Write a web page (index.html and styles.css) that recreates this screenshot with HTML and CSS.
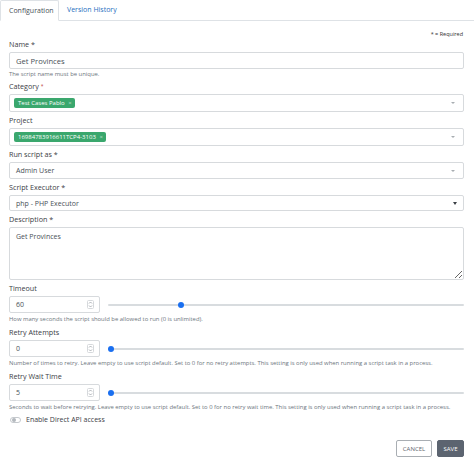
FILE: index.html
```html
<!DOCTYPE html>
<html lang="en">
<head>
  <meta charset="UTF-8">
  <title>Script Configuration</title>
  <link rel="stylesheet" href="styles.css">
</head>
<body>
  <div class="tabs">
    <div class="tab active">Configuration</div>
    <div class="tab link">Version History</div>
  </div>

  <form class="form">
    <div class="required-note">* = Required</div>

    <div class="group">
      <label>Name *</label>
      <input class="control name" type="text" value="Get Provinces">
      <div class="help">The script name must be unique.</div>
    </div>

    <div class="group">
      <label>Category <span class="sup">*</span></label>
      <div class="control multi">
        <span class="tag">Test Cases Pablo <span class="x">&times;</span></span>
        <span class="caret light"></span>
      </div>
    </div>

    <div class="group">
      <label>Project</label>
      <div class="control multi">
        <span class="tag">16984783916611TCP4-3103 <span class="x">&times;</span></span>
        <span class="caret light"></span>
      </div>
    </div>

    <div class="group">
      <label>Run script as *</label>
      <div class="control single">
        <span>Admin User</span>
        <span class="caret light"></span>
      </div>
    </div>

    <div class="group">
      <label>Script Executor *</label>
      <div class="control single short">
        <span>php - PHP Executor</span>
        <span class="caret dark"></span>
      </div>
    </div>

    <div class="group">
      <label>Description *</label>
      <textarea class="control area">Get Provinces</textarea>
    </div>

    <div class="group wide">
      <label>Timeout</label>
      <div class="slider-row">
        <div class="control number">
          <span>60</span>
          <svg class="spin" width="7" height="9" viewBox="0 0 7 9"><rect x="0.5" y="0.5" width="6" height="8" rx="1" fill="#fff" stroke="#d6d9dc"/><path d="M2 3.5 L3.5 2 L5 3.5" fill="none" stroke="#9aa0a6" stroke-width="0.8"/><path d="M2 5.5 L3.5 7 L5 5.5" fill="none" stroke="#9aa0a6" stroke-width="0.8"/></svg>
        </div>
        <input class="range" type="range" min="0" max="300" value="60">
      </div>
      <div class="help">How many seconds the script should be allowed to run (0 is unlimited).</div>
    </div>

    <div class="group wide">
      <label>Retry Attempts</label>
      <div class="slider-row">
        <div class="control number">
          <span>0</span>
          <svg class="spin" width="7" height="9" viewBox="0 0 7 9"><rect x="0.5" y="0.5" width="6" height="8" rx="1" fill="#fff" stroke="#d6d9dc"/><path d="M2 3.5 L3.5 2 L5 3.5" fill="none" stroke="#9aa0a6" stroke-width="0.8"/><path d="M2 5.5 L3.5 7 L5 5.5" fill="none" stroke="#9aa0a6" stroke-width="0.8"/></svg>
        </div>
        <input class="range" type="range" min="0" max="10" value="0">
      </div>
      <div class="help">Number of times to retry. Leave empty to use script default. Set to 0 for no retry attempts. This setting is only used when running a script task in a process.</div>
    </div>

    <div class="group wide">
      <label>Retry Wait Time</label>
      <div class="slider-row">
        <div class="control number">
          <span>5</span>
          <svg class="spin" width="7" height="9" viewBox="0 0 7 9"><rect x="0.5" y="0.5" width="6" height="8" rx="1" fill="#fff" stroke="#d6d9dc"/><path d="M2 3.5 L3.5 2 L5 3.5" fill="none" stroke="#9aa0a6" stroke-width="0.8"/><path d="M2 5.5 L3.5 7 L5 5.5" fill="none" stroke="#9aa0a6" stroke-width="0.8"/></svg>
        </div>
        <input class="range" type="range" min="0" max="3600" value="5">
      </div>
      <div class="help">Seconds to wait before retrying. Leave empty to use script default. Set to 0 for no retry wait time. This setting is only used when running a script task in a process.</div>
    </div>

    <div class="switch-row">
      <span class="switch"><span class="knob"></span></span>
      <span>Enable Direct API access</span>
    </div>

    <div class="actions">
      <button type="button" class="btn cancel">CANCEL</button>
      <button type="button" class="btn save">SAVE</button>
    </div>
  </form>
</body>
</html>
```

FILE: styles.css
```css
body {
  font-family: 'Open Sans', sans-serif;
  background-color: #ffffff;
  color: #444a50;
  margin: 0;
  padding: 0;
}
.tabs {
  display: flex;
  height: 21px;
  border-bottom: 1px solid #dee2e6;
  box-sizing: border-box;
}
.tab {
  font-size: 7px;
  line-height: 20px;
  padding: 0 7px 0 8px;
  height: 21px;
  box-sizing: border-box;
}
.tab.active {
  border: 1px solid #dee2e6;
  border-bottom-color: #ffffff;
  border-top-left-radius: 2px;
  border-top-right-radius: 2px;
  background: #ffffff;
  color: #495057;
  padding-left: 8px;
  width: 59px;
}
.tab.link {
  color: #1f6fc0;
}
.form {
  padding: 8px 10px 0 9px;
}
.required-note {
  text-align: right;
  font-size: 5.5px;
  line-height: 8px;
  color: #333;
  padding-right: 1px;
  margin-top: 1px;
  margin-bottom: 1px;
}
.group {
  margin-bottom: 3px;
}
.group.wide {
  margin-bottom: 4px;
}
label {
  display: block;
  font-size: 7.2px;
  line-height: 10px;
  margin-bottom: 3px;
  color: #3b4046;
}
.sup {
  font-size: 5px;
  vertical-align: top;
  color: #c04040;
}
.control {
  display: flex;
  align-items: center;
  width: 100%;
  height: 17px;
  box-sizing: border-box;
  border: 1px solid #d7dadd;
  border-radius: 2px;
  padding: 0 6px;
  font-family: 'Open Sans', sans-serif;
  font-size: 7px;
  color: #495057;
  background: #ffffff;
  outline: none;
}
.control.name {
  font-size: 7.6px;
}
.multi {
  height: 18px;
  padding-left: 4px;
}
.single {
  justify-content: space-between;
}
.short {
  height: 16px;
}
.multi .caret {
  margin-left: auto;
}
.tag {
  background-color: #3aa76d;
  color: #ffffff;
  font-size: 6px;
  line-height: 10px;
  padding: 0 3px 0 4px;
  border-radius: 2px;
}
.tag .x {
  opacity: 0.6;
  margin-left: 2px;
}
.caret {
  width: 0;
  height: 0;
  border-left: 2px solid transparent;
  border-right: 2px solid transparent;
  margin-right: 2px;
}
.caret.light {
  border-top: 2px solid #a8adb2;
}
.caret.dark {
  border-top: 3px solid #3a3f44;
  border-left-width: 2.5px;
  border-right-width: 2.5px;
  margin-right: 0;
}
.area {
  display: block;
  height: 53px;
  padding: 4px 6px;
  resize: vertical;
  line-height: 10px;
}
.slider-row {
  display: flex;
  align-items: center;
  gap: 8px;
}
.number {
  width: 91px;
  flex: none;
  justify-content: space-between;
  padding-right: 5px;
}
.spin {
  display: block;
}
.range {
  -webkit-appearance: none;
  appearance: none;
  flex: 1;
  margin: 0;
  height: 6px;
  background: transparent;
}
.range::-webkit-slider-runnable-track {
  height: 2px;
  background: #d8dcdf;
  border-radius: 1px;
}
.range::-webkit-slider-thumb {
  -webkit-appearance: none;
  width: 6px;
  height: 6px;
  margin-top: -2px;
  border-radius: 50%;
  background: #1a6ff0;
  border: none;
}
.help {
  font-size: 5.9px;
  line-height: 8px;
  margin-top: 1px;
  color: #6c757d;
  white-space: nowrap;
}
.wide .help {
  margin-top: 2px;
}
.switch-row {
  display: flex;
  align-items: center;
  gap: 5px;
  font-size: 7px;
  line-height: 10px;
  color: #3b4046;
  padding-left: 1px;
  margin-top: 1px;
}
.switch {
  display: flex;
  align-items: center;
  width: 11px;
  height: 6px;
  box-sizing: border-box;
  border: 1px solid #c5c9cd;
  border-radius: 3px;
  padding: 0 1px;
}
.knob {
  width: 4px;
  height: 4px;
  border-radius: 50%;
  background: #b3b8bd;
}
.actions {
  display: flex;
  justify-content: flex-end;
  gap: 5px;
  margin-top: 15px;
}
.btn {
  font-family: 'Open Sans', sans-serif;
  font-size: 6px;
  height: 17px;
  padding: 0 5px;
  border-radius: 2px;
  cursor: pointer;
}
.cancel {
  width: 36px;
  background: #ffffff;
  border: 1px solid #a9aeb3;
  color: #5f666d;
}
.save {
  width: 27px;
  background: #5c6470;
  border: 1px solid #5c6470;
  color: #ffffff;
}
```
